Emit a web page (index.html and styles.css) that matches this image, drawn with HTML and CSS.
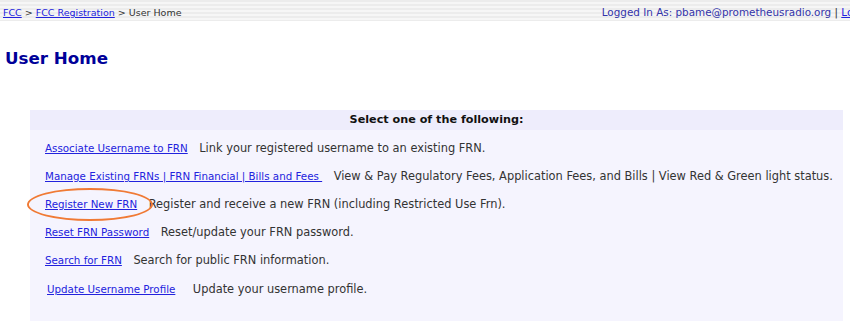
FILE: index.html
```html
<!DOCTYPE html>
<html lang="en">
<head>
    <meta charset="UTF-8">
    <title>FCC Registration - User Home</title>
    <link rel="stylesheet" href="styles.css">
</head>
<body>
    <div class="topbar">
        <div class="crumbs">
            <a href="#">FCC</a> &gt; <a href="#">FCC Registration</a> &gt; User Home
        </div>
        <div class="login-info">
            Logged In As: pbame@prometheusradio.org <span class="sep">|</span> <a href="#">Log Out</a>
        </div>
    </div>

    <h1 class="page-title">User Home</h1>

    <div class="menu-box">
        <div class="menu-head">Select one of the following:</div>
        <div class="menu-body">
            <div class="menu-row">
                <a href="#">Associate Username to FRN</a>
                <span class="desc">Link your registered username to an existing FRN.</span>
            </div>
            <div class="menu-row">
                <a href="#">Manage Existing FRNs | FRN Financial | Bills and Fees&nbsp;</a>
                <span class="desc">View &amp; Pay Regulatory Fees, Application Fees, and Bills | View Red &amp; Green light status.</span>
            </div>
            <div class="menu-row">
                <a href="#" class="circled">Register New FRN</a>
                <span class="desc">Register and receive a new FRN (including Restricted Use Frn).</span>
            </div>
            <div class="menu-row">
                <a href="#">Reset FRN Password</a>
                <span class="desc">Reset/update your FRN password.</span>
            </div>
            <div class="menu-row">
                <a href="#">Search for FRN</a>
                <span class="desc">Search for public FRN information.</span>
            </div>
            <div class="menu-row menu-row-last">
                <a href="#">Update Username Profile</a>
                <span class="desc">Update your username profile.</span>
            </div>
        </div>
    </div>
</body>
</html>
```

FILE: styles.css
```css
body {
    margin: 0;
    font-family: "DejaVu Sans", Verdana, sans-serif;
    background-color: white;
    color: #333;
}

a {
    color: #2222dd;
}

/* striped header strip */
.topbar {
    display: flex;
    justify-content: space-between;
    align-items: baseline;
    height: 21px;
    padding: 0 0 0 3px;
    font-size: 10.4px;
    line-height: 24px;
    overflow: hidden;
    white-space: nowrap;
    background: repeating-linear-gradient(#ececec 0, #ececec 2px, #f6f6f6 2px, #f6f6f6 4px);
}

.crumbs {
    color: #333;
    font-size: 9.5px;
}

.login-info {
    color: #3333aa;
    margin-right: -32px;
}

.login-info .sep {
    color: #333;
}

.page-title {
    margin: 26px 0 0 5px;
    font-size: 16.7px;
    line-height: 22px;
    color: #000099;
}

.menu-box {
    margin: 41px 7px 0 30px;
    background-color: #f5f4fe;
}

.menu-head {
    height: 20px;
    line-height: 20px;
    text-align: center;
    font-size: 11.2px;
    font-weight: bold;
    color: #111;
    background-color: #eeedfc;
}

.menu-body {
    padding: 6px 0 16px 15px;
}

.menu-row {
    height: 28px;
    line-height: 24px;
    font-size: 11px;
}

.menu-row a {
    font-size: 10.3px;
    margin-right: 8px;
}

.menu-row .desc {
    font-size: 11.4px;
    color: #333;
}

.menu-row-last {
    padding-top: 1px;
}

.menu-row-last a {
    margin-left: 2px;
    margin-right: 14px;
}

.circled {
    position: relative;
}

.circled::after {
    content: "";
    position: absolute;
    left: -18px;
    top: -10px;
    width: 122px;
    height: 29px;
    border: 2px solid #f07a35;
    border-radius: 50%;
}
```
